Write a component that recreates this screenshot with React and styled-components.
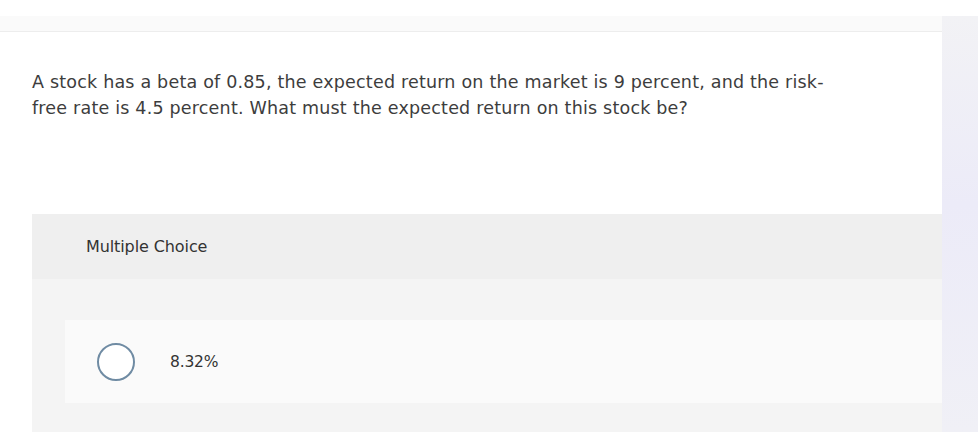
import styled, { createGlobalStyle } from 'styled-components'

const GlobalStyle = createGlobalStyle`
  body {
    margin: 0;
    background: #ffffff;
    font-family: "DejaVu Sans", "Open Sans", sans-serif;
    color: #333333;
  }
`

const Page = styled.div`
  width: 978px;
  height: 442px;
  padding-top: 16px;
  box-sizing: border-box;
  display: flex;
  overflow: hidden;
`

const Main = styled.div`
  width: 942px;
  display: flex;
  flex-direction: column;
`

const TopStrip = styled.div`
  height: 15px;
  background: #fafafa;
  border-bottom: 1px solid #ededed;
`

const Question = styled.p`
  margin: 0;
  padding: 37px 32px 0 32px;
  width: 864px;
  height: 182px;
  box-sizing: border-box;
  font-size: 17.5px;
  letter-spacing: 0.2px;
  line-height: 26px;
  color: #3d3d3d;
`

const ChoiceBlock = styled.section`
  margin-left: 32px;
  height: 218px;
  background: #f4f4f4;
  display: flex;
  flex-direction: column;
`

const ChoiceHeader = styled.div`
  height: 65px;
  background: #efefef;
  display: flex;
  align-items: center;
  padding-left: 54px;
  font-size: 16px;
  letter-spacing: -0.1px;
  color: #333333;
`

const OptionList = styled.div`
  padding: 41px 0 29px 33px;
`

const Option = styled.label`
  height: 83px;
  background: #fafafa;
  display: flex;
  align-items: center;
  padding-left: 32px;
  gap: 35px;
  font-size: 15.5px;
  letter-spacing: -0.2px;
  color: #333333;
`

const Radio = styled.span`
  width: 34px;
  height: 34px;
  border-radius: 50%;
  border: 2px solid #6f8ba3;
  background: #ffffff;
  flex-shrink: 0;
`

const SidePanel = styled.aside`
  flex: 1;
  height: 416px;
  background: linear-gradient(to bottom, #f2f2f5 0%, #ecebf8 45%, #f0f0f6 100%);
`

export default function App() {
  return (
    <>
      <GlobalStyle />
      <Page>
        <Main>
          <TopStrip />
          <Question>
            A stock has a beta of 0.85, the expected return on the market is 9 percent, and the risk-free
            rate is 4.5 percent. What must the expected return on this stock be?
          </Question>
          <ChoiceBlock>
            <ChoiceHeader>Multiple Choice</ChoiceHeader>
            <OptionList>
              <Option>
                <Radio />
                8.32%
              </Option>
            </OptionList>
          </ChoiceBlock>
        </Main>
        <SidePanel />
      </Page>
    </>
  )
}
